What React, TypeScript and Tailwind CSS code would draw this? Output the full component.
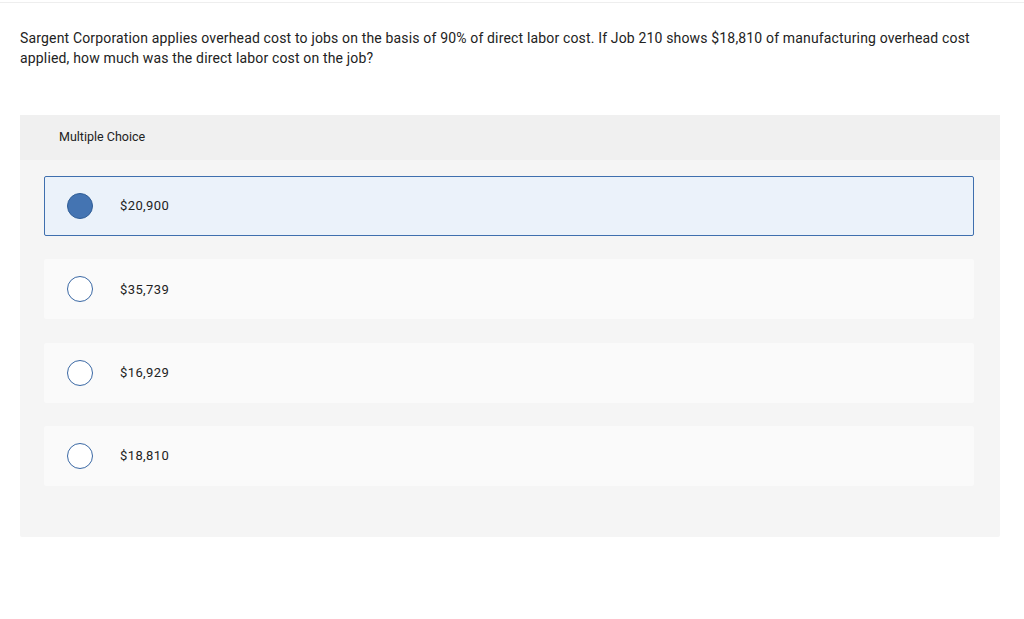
const options = [
  { label: '$20,900', selected: true },
  { label: '$35,739', selected: false },
  { label: '$16,929', selected: false },
  { label: '$18,810', selected: false },
];

export default function App() {
  return (
    <div className="min-h-[619px] bg-white text-[#222] [font-family:Roboto,'Open_Sans',sans-serif]">
      <div className="h-[2px]" />
      <div className="h-px bg-[#eeeeee]" />
      <div className="px-5 pt-[25px]">
        <p className="text-[14px] leading-[20px] tracking-[0.16px] text-[#222]">
          Sargent Corporation applies overhead cost to jobs on the basis of 90% of direct labor cost. If Job 210 shows $18,810 of manufacturing overhead cost applied, how much was the direct labor cost on the job?
        </p>

        <div className="mt-[47px] w-[980px] rounded-[2px] bg-[#f5f5f5]">
          <div className="flex h-[45px] items-center bg-[#f0f0f0] pl-[39px] text-[12.5px] text-[#222]">
            Multiple Choice
          </div>
          <div className="flex flex-col gap-[23.3px] px-6 pt-4 pb-[51px]">
            {options.map((o) => (
              <div
                key={o.label}
                className={
                  o.selected
                    ? 'flex h-[60px] w-[930px] items-center rounded-[2px] border border-[#3f6fae] bg-[#ebf2fa]'
                    : 'flex h-[60px] w-[930px] items-center rounded-[2px] border border-transparent bg-[#fafafa]'
                }
              >
                <span
                  className={
                    o.selected
                      ? 'ml-[22px] h-[26px] w-[26px] rounded-full border border-[#2f5d96] bg-[#4474b2]'
                      : 'ml-[22px] h-[26px] w-[26px] rounded-full border border-[#3a68a4] bg-white'
                  }
                />
                <span className="ml-[27px] text-[13px] tracking-[0.4px] text-[#222]">{o.label}</span>
              </div>
            ))}
          </div>
        </div>
      </div>
    </div>
  );
}
